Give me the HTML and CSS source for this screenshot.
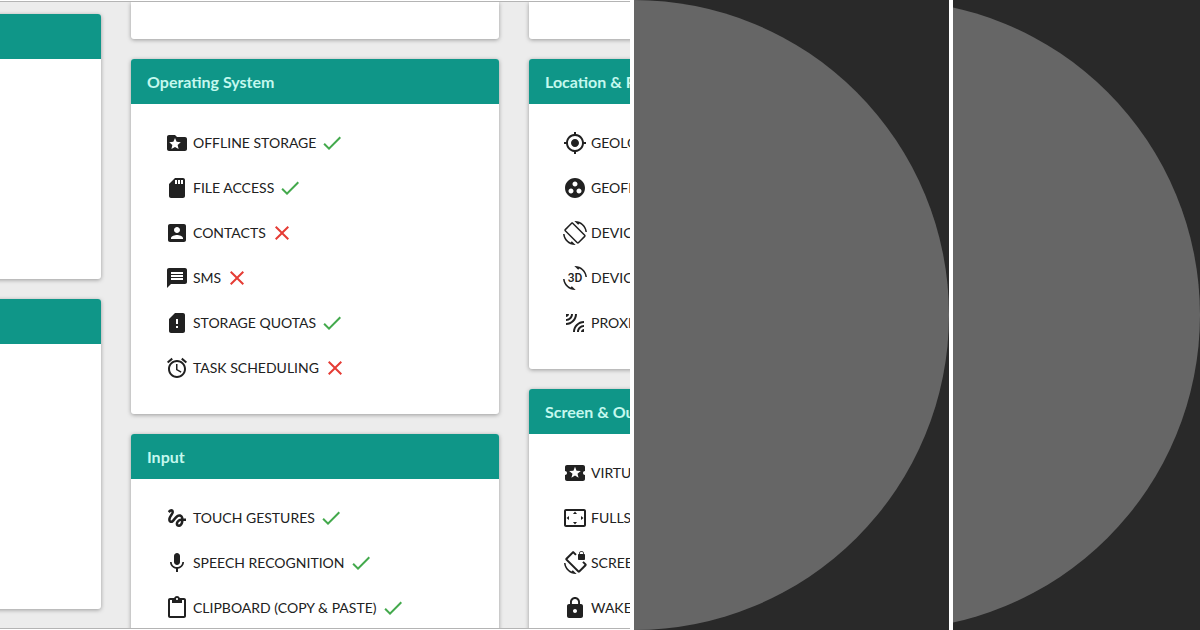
FILE: index.html
```html
<!DOCTYPE html>
<html lang="en">
<head>
    <meta charset="UTF-8">
    <title>Web features</title>
    <link rel="stylesheet" href="styles.css">
</head>
<body>
<svg class="sprite" aria-hidden="true">
    <symbol id="yes" viewBox="0 0 24 24"><path d="M9 16.2L4.8 12l-1.4 1.4L9 19 21 7l-1.4-1.4L9 16.2z"/></symbol>
    <symbol id="no" viewBox="0 0 24 24"><path d="M19 6.41L17.59 5 12 10.59 6.41 5 5 6.41 10.59 12 5 17.59 6.41 19 12 13.41 17.59 19 19 17.59 13.41 12z"/></symbol>
</svg>
<main class="panels">
    <section class="board">
        <div class="column column-first">
            <article class="card">
                <h2></h2>
                <div class="blank blank-short"></div>
            </article>
            <article class="card">
                <h2></h2>
                <div class="blank blank-tall"></div>
            </article>
        </div>

        <div class="column">
            <article class="card card-end"></article>
            <article class="card">
                <h2>Operating System</h2>
                <ul>
                    <li><a href="#offline-storage"><svg class="icon" viewBox="0 0 24 24"><path d="M20 6h-8l-2-2H4c-1.1 0-1.99.9-1.99 2L2 18c0 1.1.9 2 2 2h16c1.1 0 2-.9 2-2V8c0-1.1-.9-2-2-2zm-6.42 12L10 15.9 6.42 18l.95-4.07-3.16-2.74 4.16-.36L10 7l1.63 3.84 4.16.36-3.16 2.74.95 4.06z"/></svg>Offline Storage<svg class="mark yes"><use href="#yes"/></svg></a></li>
                    <li><a href="#file-access"><svg class="icon" viewBox="0 0 24 24"><path d="M18 2h-8L4.02 8 4 20c0 1.1.9 2 2 2h12c1.1 0 2-.9 2-2V4c0-1.1-.9-2-2-2zm-6 6h-2V4h2v4zm3 0h-2V4h2v4zm3 0h-2V4h2v4z"/></svg>File Access<svg class="mark yes"><use href="#yes"/></svg></a></li>
                    <li><a href="#contacts"><svg class="icon" viewBox="0 0 24 24"><path d="M3 5v14c0 1.1.89 2 2 2h14c1.1 0 2-.9 2-2V5c0-1.1-.9-2-2-2H5c-1.11 0-2 .9-2 2zm12 4c0 1.66-1.34 3-3 3s-3-1.34-3-3 1.34-3 3-3 3 1.34 3 3zm-9 8c0-2 4-3.1 6-3.1s6 1.1 6 3.1v1H6v-1z"/></svg>Contacts<svg class="mark no"><use href="#no"/></svg></a></li>
                    <li><a href="#sms"><svg class="icon" viewBox="0 0 24 24"><path d="M20 2H4c-1.1 0-1.99.9-1.99 2L2 22l4-4h14c1.1 0 2-.9 2-2V4c0-1.1-.9-2-2-2zm-2 12H6v-2h12v2zm0-3H6V9h12v2zm0-3H6V6h12v2z"/></svg>SMS<svg class="mark no"><use href="#no"/></svg></a></li>
                    <li><a href="#storage-quotas"><svg class="icon" viewBox="0 0 24 24"><path d="M18 2h-8L4.02 8 4 20c0 1.1.9 2 2 2h12c1.1 0 2-.9 2-2V4c0-1.1-.9-2-2-2zm-5 15h-2v-2h2v2zm0-4h-2V8h2v5z"/></svg>Storage Quotas<svg class="mark yes"><use href="#yes"/></svg></a></li>
                    <li><a href="#task-scheduling"><svg class="icon" viewBox="0 0 24 24"><path d="M22 5.72l-4.6-3.86-1.29 1.53 4.6 3.86L22 5.72zM7.88 3.39L6.6 1.86 2 5.71l1.29 1.53 4.59-3.85zM12.5 8H11v6l4.75 2.85.75-1.23-4-2.37V8zM12 4c-4.97 0-9 4.03-9 9s4.02 9 9 9c4.97 0 9-4.03 9-9s-4.03-9-9-9zm0 16c-3.87 0-7-3.13-7-7s3.13-7 7-7 7 3.13 7 7-3.13 7-7 7z"/></svg>Task Scheduling<svg class="mark no"><use href="#no"/></svg></a></li>
                </ul>
            </article>
            <article class="card">
                <h2>Input</h2>
                <ul>
                    <li><a href="#touch-gestures"><svg class="icon" viewBox="0 0 24 24"><path d="M4.59 6.89c.7-.71 1.4-1.35 1.71-1.22.5.2 0 1.03-.3 1.52-.25.42-2.86 3.89-2.86 6.31 0 1.28.48 2.34 1.34 2.98.75.56 1.74.73 2.64.46 1.07-.31 1.95-1.4 3.06-2.77 1.21-1.49 2.83-3.44 4.08-3.44 1.63 0 1.65 1.01 1.76 1.79-3.78.64-5.38 3.67-5.38 5.37 0 1.7 1.44 3.09 3.21 3.09 1.63 0 4.29-1.33 4.69-6.1H21v-2.5h-2.47c-.15-1.65-1.09-4.2-4.03-4.2-2.25 0-4.18 1.91-4.94 2.84-.58.73-2.06 2.48-2.29 2.72-.25.3-.68.84-1.11.84-.45 0-.72-.83-.36-1.92.35-1.09 1.4-2.86 1.85-3.52.78-1.14 1.3-1.92 1.3-3.28C8.95 3.69 7.31 3 6.44 3 5.12 3 3.97 4 3.72 4.25c-.36.36-.66.66-.88.93l1.75 1.71zm9.29 11.66c-.31 0-.74-.26-.74-.72 0-.6.73-2.2 2.87-2.76-.3 2.69-1.43 3.48-2.13 3.48z"/></svg>Touch Gestures<svg class="mark yes"><use href="#yes"/></svg></a></li>
                    <li><a href="#speech-recognition"><svg class="icon" viewBox="0 0 24 24"><path d="M12 14c1.66 0 2.99-1.34 2.99-3L15 5c0-1.66-1.34-3-3-3S9 3.34 9 5v6c0 1.66 1.34 3 3 3zm5.3-3c0 3-2.54 5.1-5.3 5.1S6.7 14 6.7 11H5c0 3.41 2.72 6.23 6 6.72V21h2v-3.28c3.28-.48 6-3.3 6-6.72h-1.7z"/></svg>Speech Recognition<svg class="mark yes"><use href="#yes"/></svg></a></li>
                    <li><a href="#clipboard"><svg class="icon" viewBox="0 0 24 24"><path d="M19 2h-4.18C14.4.84 13.3 0 12 0c-1.3 0-2.4.84-2.82 2H5c-1.1 0-2 .9-2 2v16c0 1.1.9 2 2 2h14c1.1 0 2-.9 2-2V4c0-1.1-.9-2-2-2zm-7 0c.55 0 1 .45 1 1s-.45 1-1 1-1-.45-1-1 .45-1 1-1zm7 18H5V4h2v3h10V4h2v16z"/></svg>Clipboard (Copy &amp; Paste)<svg class="mark yes"><use href="#yes"/></svg></a></li>
                </ul>
            </article>
        </div>

        <div class="column">
            <article class="card card-end"></article>
            <article class="card">
                <h2>Location &amp; Position</h2>
                <ul>
                    <li><a href="#geolocation"><svg class="icon" viewBox="0 0 24 24"><path d="M12 8c-2.21 0-4 1.79-4 4s1.79 4 4 4 4-1.79 4-4-1.79-4-4-4zm8.94 3c-.46-4.17-3.77-7.48-7.94-7.94V1h-2v2.06C6.83 3.52 3.52 6.83 3.06 11H1v2h2.06c.46 4.17 3.77 7.48 7.94 7.94V23h2v-2.06c4.17-.46 7.48-3.77 7.94-7.94H23v-2h-2.06zM12 19c-3.87 0-7-3.13-7-7s3.13-7 7-7 7 3.13 7 7-3.13 7-7 7z"/></svg>Geolocation</a></li>
                    <li><a href="#geofencing"><svg class="icon" viewBox="0 0 24 24"><path d="M12 2C6.48 2 2 6.48 2 12s4.48 10 10 10 10-4.48 10-10S17.52 2 12 2zM8 17.5c-1.38 0-2.5-1.12-2.5-2.5s1.12-2.5 2.5-2.5 2.5 1.12 2.5 2.5-1.12 2.5-2.5 2.5zM9.5 8c0-1.38 1.12-2.5 2.5-2.5s2.5 1.12 2.5 2.5-1.12 2.5-2.5 2.5S9.5 9.38 9.5 8zm6.5 9.5c-1.38 0-2.5-1.12-2.5-2.5s1.12-2.5 2.5-2.5 2.5 1.12 2.5 2.5-1.12 2.5-2.5 2.5z"/></svg>Geofencing</a></li>
                    <li><a href="#device-position"><svg class="icon" viewBox="0 0 24 24"><path d="M16.48 2.52c3.27 1.55 5.61 4.72 5.97 8.48h1.5C23.44 4.84 18.29 0 12 0l-.66.03 3.81 3.81 1.33-1.32zm-6.25-.77c-.59-.59-1.54-.59-2.12 0L1.75 8.11c-.59.59-.59 1.54 0 2.12l12.02 12.02c.59.59 1.54.59 2.12 0l6.36-6.36c.59-.59.59-1.54 0-2.12L10.23 1.75zm4.6 19.44L2.81 9.17l6.36-6.36 12.02 12.02-6.36 6.36zm-7.31.29C4.25 19.94 1.91 16.76 1.55 13H.05C.56 19.16 5.71 24 12 24l.66-.03-3.81-3.81-1.33 1.32z"/></svg>Device Position</a></li>
                    <li><a href="#device-motion"><svg class="icon" viewBox="0 0 24 24"><path d="M7.52 21.48C4.25 19.94 1.91 16.76 1.55 13H.05C.56 19.16 5.71 24 12 24l.66-.03-3.81-3.81-1.33 1.32zM16.48 2.52c3.27 1.55 5.61 4.72 5.97 8.48h1.5C23.44 4.84 18.29 0 12 0l-.66.03 3.81 3.81 1.33-1.32z"/><text class="icon-text" x="12" y="16" text-anchor="middle">3D</text></svg>Device Motion</a></li>
                    <li><a href="#proximity"><svg class="icon" viewBox="0 0 24 24"><path d="M6 3H3v3c1.66 0 3-1.34 3-3zm8 0h-2c0 4.97-4.03 9-9 9v2c6.08 0 11-4.93 11-11zm-4 0H8c0 2.76-2.24 5-5 5v2c3.87 0 7-3.13 7-7zm0 18h2c0-4.97 4.03-9 9-9v-2c-6.07 0-11 4.93-11 11zm8 0h3v-3c-1.66 0-3 1.34-3 3zm-4 0h2c0-2.76 2.24-5 5-5v-2c-3.87 0-7 3.13-7 7z"/></svg>Proximity</a></li>
                </ul>
            </article>
            <article class="card">
                <h2>Screen &amp; Output</h2>
                <ul>
                    <li><a href="#virtual-reality"><svg class="icon" viewBox="0 0 24 24"><path d="M20 12c0-1.1.9-2 2-2V6c0-1.1-.9-2-2-2H4c-1.1 0-1.99.9-1.99 2v4c1.1 0 1.99.9 1.99 2s-.89 2-2 2v4c0 1.1.9 2 2 2h16c1.1 0 2-.9 2-2v-4c-1.1 0-2-.9-2-2zm-4.42 4.8L12 14.5l-3.58 2.3 1.08-4.12-3.29-2.69 4.24-.25L12 5.8l1.54 3.95 4.24.25-3.29 2.69 1.09 4.11z"/></svg>Virtual Reality</a></li>
                    <li><a href="#fullscreen"><svg class="icon" viewBox="0 0 24 24"><path d="M12.01 5.5L10 8h4l-1.99-2.5zM18 10v4l2.5-1.99L18 10zM6 10l-2.5 2.01L6 14v-4zm8 6h-4l2.01 2.5L14 16zm7-13H3c-1.1 0-2 .9-2 2v14c0 1.1.9 2 2 2h18c1.1 0 2-.9 2-2V5c0-1.1-.9-2-2-2zm0 16.01H3V4.99h18v14.02z"/></svg>Fullscreen</a></li>
                    <li><a href="#screen-orientation"><svg class="icon" viewBox="0 0 24 24"><path d="M23.25 12.77l-2.57-2.57-1.41 1.41 2.22 2.22-5.66 5.66L4.51 8.17l5.66-5.66 2.1 2.1 1.41-1.41L11.23.75c-.59-.59-1.54-.59-2.12 0L2.75 7.11c-.59.59-.59 1.54 0 2.12l12.02 12.02c.59.59 1.54.59 2.12 0l6.36-6.36c.59-.59.59-1.54 0-2.12zM8.47 20.48C5.2 18.94 2.86 15.76 2.5 12H1c.51 6.16 5.66 11 11.95 11l.66-.03-3.81-3.82-1.33 1.33zM16 9h5c.55 0 1-.45 1-1V4c0-.55-.45-1-1-1v-.5C21 1.12 19.88 0 18.5 0S16 1.12 16 2.5V3c-.55 0-1 .45-1 1v4c0 .55.45 1 1 1zm.8-6.5c0-.94.76-1.7 1.7-1.7s1.7.76 1.7 1.7V3h-3.4v-.5z"/></svg>Screen Orientation</a></li>
                    <li><a href="#wake-lock"><svg class="icon" viewBox="0 0 24 24"><path d="M18 8h-1V6c0-2.76-2.24-5-5-5S7 3.24 7 6v2H6c-1.1 0-2 .9-2 2v10c0 1.1.9 2 2 2h12c1.1 0 2-.9 2-2V10c0-1.1-.9-2-2-2zm-6 9c-1.1 0-2-.9-2-2s.9-2 2-2 2 .9 2 2-.9 2-2 2zm3.1-9H8.9V6c0-1.71 1.39-3.1 3.1-3.1 1.71 0 3.1 1.39 3.1 3.1v2z"/></svg>Wake Lock</a></li>
                </ul>
            </article>
        </div>
    </section>
    <section class="disc-panel"><div class="disc"></div></section>
    <section class="disc-panel"><div class="disc"></div></section>
</main>
</body>
</html>
```
FILE: styles.css
```css
* { box-sizing: border-box; }
body { margin: 0; background: #fff; color: #212121; font-family: Lato, sans-serif; }
.sprite { display: none; }

.panels { display: grid; grid-template-columns: 630fr 315fr 247fr; grid-template-rows: 100%; gap: 4px; height: 100vh; overflow: hidden; }

/* feature board, centred on its middle column */
.board { display: grid; grid-template-columns: repeat(3, 368px); justify-content: center; gap: 30px; margin: 1px 0; min-width: 0; overflow: hidden; background: #ececec; border-top: 1px solid #b4b4b4; border-bottom: 1px solid #b4b4b4; }
.column { display: flex; flex-direction: column; gap: 20px; }
.column-first { padding-top: 12px; }

.card { flex: none; background: #fff; border-radius: 3px; box-shadow: 0 1px 4px rgba(0, 0, 0, 0.35); }
.card-end { height: 37px; border-radius: 0 0 3px 3px; }
.card h2 { height: 45px; margin: 0; padding: 0 16px; border-radius: 3px 3px 0 0; background: #0f9688; color: #c4f8ee; font-size: 16px; font-weight: 700; line-height: 45px; white-space: nowrap; }
.card ul { margin: 0; padding: 16px 34px 24px; list-style: none; }
.blank-short { height: 220px; }
.blank-tall { height: 265px; }

.card a { display: flex; align-items: center; height: 45px; color: #212121; font-size: 14px; text-decoration: none; text-transform: uppercase; white-space: nowrap; }
.icon, .mark { flex: none; width: 24px; height: 24px; fill: #212121; }
.icon { margin-right: 4px; }
.icon-text { font: 500 12px Roboto, sans-serif; }
.mark { margin-left: 4px; }
.yes { fill: #43a94c; }
.no { fill: #e53c35; }

.disc-panel { display: flex; justify-content: flex-end; min-width: 0; overflow: hidden; background: #292929; }
.disc { flex: none; height: 100%; aspect-ratio: 1; border-radius: 50%; background: #666; }
```
